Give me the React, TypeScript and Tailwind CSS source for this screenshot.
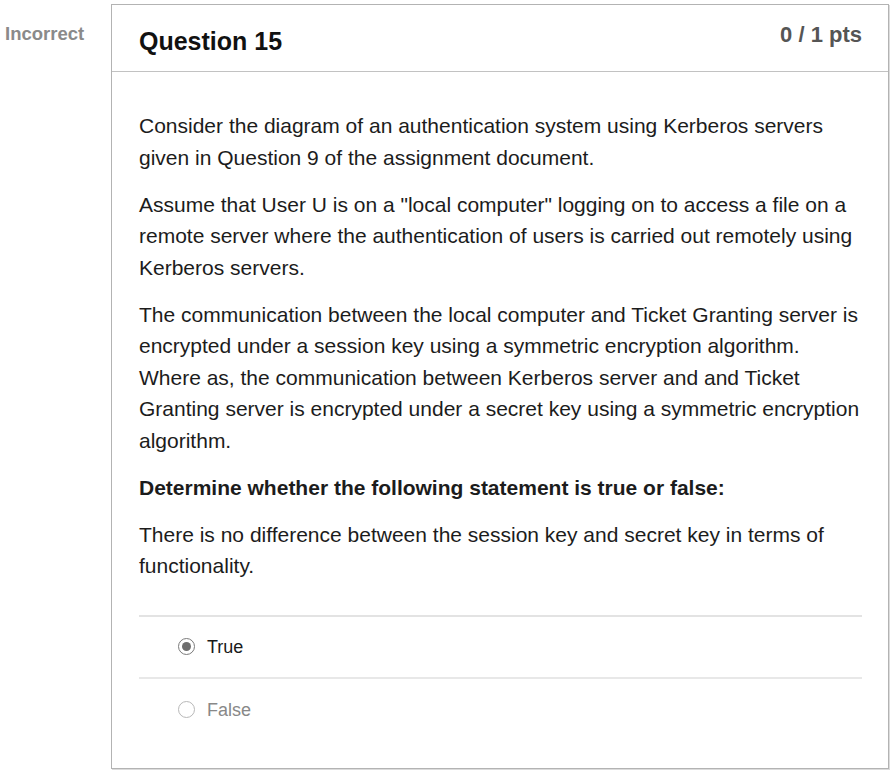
import React from "react";

function Radio({ checked }: { checked: boolean }) {
  return checked ? (
    <span className="flex items-center justify-center w-[17px] h-[17px] rounded-full border-[1.5px] border-[#7a7a7a] bg-white">
      <span className="w-[9px] h-[9px] rounded-full bg-[#6e6e6e]" />
    </span>
  ) : (
    <span className="w-[17px] h-[17px] rounded-full border-[1.5px] border-[#b8b8b8] bg-white" />
  );
}

export default function App() {
  return (
    <div className="w-[895px] h-[770px] bg-white flex font-['Liberation_Sans',Arial,sans-serif] text-[#1a1a1a]">
      <div className="w-[111px] shrink-0 pl-[5px] pt-[23px]">
        <span className="block text-[18.5px] leading-[22px] font-bold text-[#8a8a8a]">
          Incorrect
        </span>
      </div>
      <div className="mt-[4px] w-[778px] h-[765px] border border-[#b3b3b3] shadow-[1px_1px_0_#dcdcdc] flex flex-col">
        <div className="h-[67px] shrink-0 border-b border-[#c2c2c2] flex justify-between items-start pl-[27px] pr-[26px]">
          <h2 className="mt-[21px] text-[25px] leading-[30px] font-bold text-[#111]">Question 15</h2>
          <span className="mt-[17px] text-[22px] leading-[26px] font-bold text-[#555]">0 / 1 pts</span>
        </div>
        <div className="pl-[27px] pr-[26px] pt-[38px] text-[21px] leading-[31.5px] text-[#1c1c1c]">
          <div className="flex flex-col gap-[15.5px]">
            <p>
              Consider the diagram of an authentication system using Kerberos servers given in Question 9 of the
              assignment document.
            </p>
            <p>
              Assume that User U is on a "local computer" logging on to access a file on a remote server where the
              authentication of users is carried out remotely using Kerberos servers.
            </p>
            <p>
              The communication between the local computer and Ticket Granting server is encrypted under a session
              key using a symmetric encryption algorithm. Where as, the communication between Kerberos server and and
              Ticket Granting server is encrypted under a secret key using a symmetric encryption algorithm.
            </p>
            <p className="font-bold">Determine whether the following statement is true or false:</p>
            <p>
              There is no difference between the session key and secret key in terms of functionality.
            </p>
          </div>
          <div className="mt-[33px] text-[18px]">
            <div className="h-[62px] border-t-2 border-[#e3e3e3] flex items-center pl-[39px] gap-[12px]">
              <Radio checked={true} />
              <span className="text-[#1a1a1a] leading-[22px]">True</span>
            </div>
            <div className="h-[64px] border-t-2 border-[#e8e8e8] flex items-center pl-[39px] gap-[12px]">
              <Radio checked={false} />
              <span className="text-[#888] leading-[22px]">False</span>
            </div>
          </div>
        </div>
      </div>
    </div>
  );
}
